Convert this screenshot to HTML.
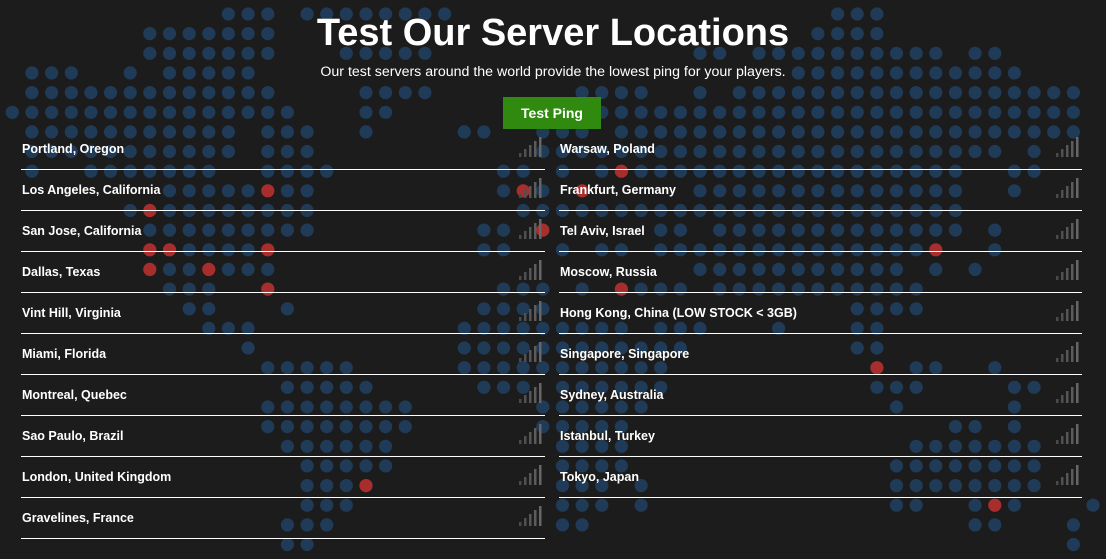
<!DOCTYPE html>
<html><head><meta charset="utf-8">
<style>
html,body{margin:0;padding:0;background:#1c1c1c;width:1106px;height:559px;overflow:hidden;}
body{position:relative;font-family:"Liberation Sans",Arial,sans-serif;color:#fff;}
#map{position:absolute;left:0;top:0;}
h1{position:absolute;left:0;width:1106px;top:11px;margin:0;text-align:center;font-size:38px;font-weight:bold;line-height:44px;}
.sub{position:absolute;left:0;width:1106px;top:64px;text-align:center;font-size:14.2px;line-height:17px;}
.btn{position:absolute;left:503px;top:97px;width:98px;height:32px;background:#2f8a0f;color:#fff;font-weight:bold;font-size:14px;line-height:32px;text-align:center;}
.row{position:absolute;height:41px;border-bottom:1px solid #fff;box-sizing:border-box;}
.row span{position:absolute;left:1px;top:12px;font-size:12.5px;font-weight:bold;line-height:16px;white-space:nowrap;}
.sig{position:absolute;right:0;top:8px;width:26px;height:20px;}
</style></head><body>
<svg id="map" width="1106" height="559"></svg>
<h1>Test Our Server Locations</h1>
<div class="sub">Our test servers around the world provide the lowest ping for your players.</div>
<div class="btn">Test Ping</div>
<div id="list"></div>
<script>
var rows=[
"11-13,15-22,42-44",
"7-13,41-44",
"7-13,17-21,35-36,38-47,49-50",
"1-3,6,8-12,40-51",
"1-13,18-21,29-32,35,37-54",
"0-14,18-19,30-54",
"1-11,13-15,18,23-24,27-29,31-54",
"1-11,13-15,27-50,52",
"1,4-10,13-16,25-26,28,30,31r,32-48,51-52",
"8-12,13r,14-15,25,26r,27,29r,35-48,51",
"6,7r,8-15,26-48",
"7-15,24-25,27r,33-34,36-48,50",
"7r,8r,9-12,13r,24-25,28,30-31,33-46,47r,50",
"7r,8-9,10r,11-13,35-45,47,49",
"8-10,13r,25-27,29,31r,32-34,36-46",
"9-10,14,24-27,43-46",
"10-12,23-31,33-35,39,43-44",
"12,23-34,43-44",
"13-17,23-33,44r,46-47,50",
"14-18,24-26,28-33,44-46,51-52",
"13-20,27-32,45,51",
"13-20,27-31,48-49,51",
"14-19,28-31,46-52",
"15-19,28-31,45-52",
"15-17,18r,28-30,32,45-52",
"15-17,28-30,32,45-46,49,50r,51,55",
"14-16,28-29,49-50,54",
"14-15,54"];
var s='';
rows.forEach(function(r,j){r.split(',').forEach(function(p){var red=p.indexOf('r')>=0;p=p.replace('r','');var a=p.split('-').map(Number);var b=a.length>1?a[1]:a[0];for(var c=a[0];c<=b;c++){s+='<circle cx="'+(12.3+19.65*c).toFixed(1)+'" cy="'+(14+19.65*j).toFixed(1)+'" r="6.6" fill="'+(red?'#a82e2e':'#1f3b57')+'"/>';}});});
document.getElementById('map').innerHTML=s;
var L=["Portland, Oregon","Los Angeles, California","San Jose, California","Dallas, Texas","Vint Hill, Virginia","Miami, Florida","Montreal, Quebec","Sao Paulo, Brazil","London, United Kingdom","Gravelines, France"];
var R=["Warsaw, Poland","Frankfurt, Germany","Tel Aviv, Israel","Moscow, Russia","Hong Kong, China (LOW STOCK &lt; 3GB)","Singapore, Singapore","Sydney, Australia","Istanbul, Turkey","Tokyo, Japan"];
var sig='<svg class="sig" width="26" height="20"><rect x="0" y="16" width="2.5" height="4" fill="#4a4a4a"/><rect x="5" y="12" width="2.5" height="8" fill="#505050"/><rect x="10" y="8" width="2.5" height="12" fill="#565656"/><rect x="15" y="4" width="2.5" height="16" fill="#5c5c5c"/><rect x="20" y="0" width="2.5" height="20" fill="#666"/></svg>';
var h='';
L.forEach(function(t,i){h+='<div class="row" style="left:21px;width:524px;top:'+(129+41*i)+'px"><span>'+t+'</span>'+sig+'</div>';});
R.forEach(function(t,i){h+='<div class="row" style="left:559px;width:523px;top:'+(129+41*i)+'px"><span>'+t+'</span>'+sig+'</div>';});
document.getElementById('list').innerHTML=h;
</script>
</body></html>
